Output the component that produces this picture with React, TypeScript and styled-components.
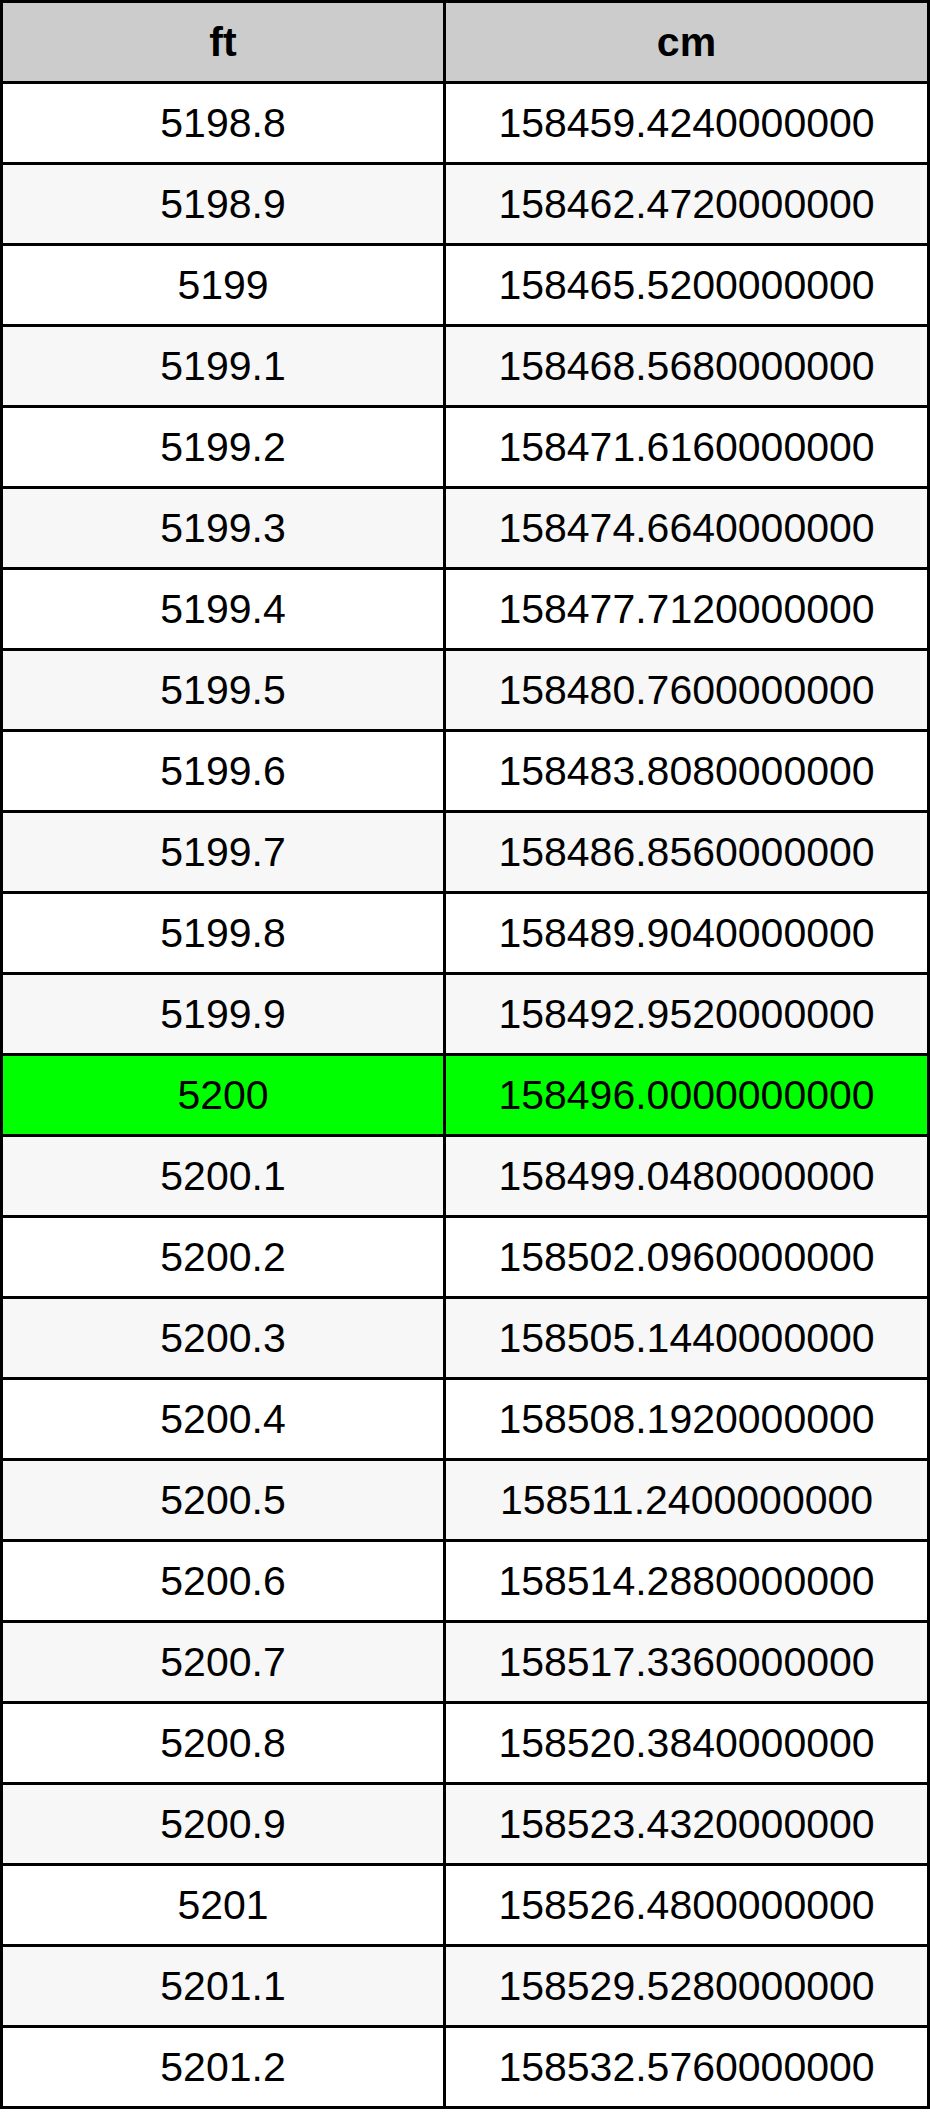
import React from "react";
import styled, { createGlobalStyle, css } from "styled-components";

const GlobalStyle = createGlobalStyle`
  html, body {
    margin: 0;
    padding: 0;
    background: #ffffff;
  }
  body {
    font-family: "Liberation Sans", Arial, sans-serif;
  }
`;

const Table = styled.div`
  display: grid;
  grid-template-columns: 440px 481px;
  grid-auto-rows: 78px;
  gap: 3px;
  padding: 3px;
  width: 930px;
  box-sizing: border-box;
  background: #000000;
`;

const HeadCell = styled.div`
  display: flex;
  align-items: center;
  justify-content: center;
  background: #cccccc;
  color: #000000;
  font-size: 41px;
  font-weight: bold;
`;

const Cell = styled.div<{ tone: "plain" | "alt" | "hit" }>`
  display: flex;
  align-items: center;
  justify-content: center;
  color: #000000;
  font-size: 41px;
  ${({ tone }) =>
    tone === "hit"
      ? css`
          background: #00ff00;
        `
      : tone === "alt"
      ? css`
          background: #f7f7f7;
        `
      : css`
          background: #ffffff;
        `}
`;

// tenths of a foot, so the maths stays exact
const START = 51988;
const COUNT = 25;
const HIT = 52000;

const formatFt = (t: number) =>
  t % 10 === 0 ? String(t / 10) : `${Math.floor(t / 10)}.${t % 10}`;

const formatCm = (t: number) => {
  const thou = t * 3048; // cm * 1000
  const whole = Math.floor(thou / 1000);
  const frac = String(thou % 1000).padStart(3, "0");
  return `${whole}.${frac}0000000`;
};

export default function App() {
  const rows = Array.from({ length: COUNT }, (_, i) => START + i);

  return (
    <>
      <GlobalStyle />
      <Table>
        <HeadCell>ft</HeadCell>
        <HeadCell>cm</HeadCell>
        {rows.map((t, i) => {
          const tone = t === HIT ? "hit" : i % 2 === 1 ? "alt" : "plain";
          return (
            <React.Fragment key={t}>
              <Cell tone={tone}>{formatFt(t)}</Cell>
              <Cell tone={tone}>{formatCm(t)}</Cell>
            </React.Fragment>
          );
        })}
      </Table>
    </>
  );
}
